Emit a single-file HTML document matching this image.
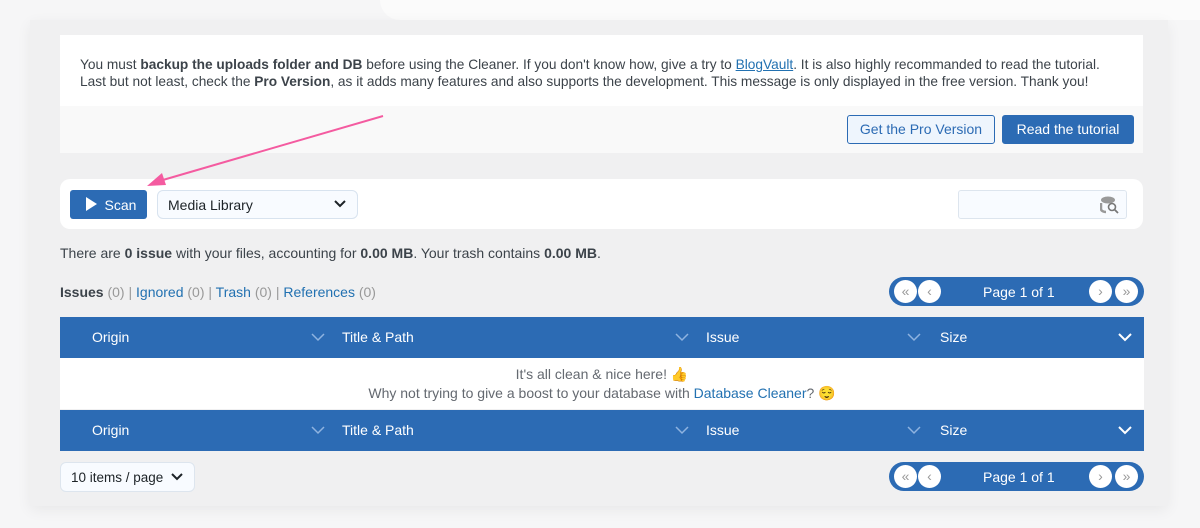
<!DOCTYPE html>
<html><head><style>
*{box-sizing:border-box;margin:0;padding:0}
body{width:1200px;height:528px;background:#f6f6f7;font-family:"Liberation Sans",sans-serif;font-size:14px;color:#3c434a;position:relative;overflow:hidden}
.bgw{position:absolute;left:380px;top:0;width:860px;height:20px;background:#fbfbfb;border-radius:0 0 0 20px}
.panel{position:absolute;left:30px;top:20px;width:1138px;height:486px;background:#f0f0f1;box-shadow:0 4px 14px rgba(0,0,0,.06)}
.abs{position:absolute}
.notice{left:60px;top:35px;width:1083px;height:118px;background:#fff}
.notice .low{position:absolute;left:0;top:71px;width:100%;height:47px;background:#f9f9f9}
.notice p{position:absolute;left:20px;top:21px;font-size:13.7px;line-height:17px;color:#3c434a;white-space:nowrap}
a{color:#2271b1}
.btn{position:absolute;height:29px;border-radius:3px;font-size:14px;line-height:27px;text-align:center}
.tb{left:60px;top:179px;width:1083px;height:50px;background:#fff;border-radius:10px}
.th{position:absolute;left:60px;width:1084px;height:41px;background:#2c6bb4;color:#fff;font-size:14px}
.th span{position:absolute;top:12px}
.th svg{position:absolute;top:15px}
.pg{position:absolute;left:889px;width:255px;height:29px;background:#2c6bb4;border-radius:15px;color:#fff}
.pg .c{position:absolute;top:3px;width:23px;height:23px;border-radius:50%;background:#fff;color:#999;font-size:14px;line-height:22px;text-align:center}
.pg .t{position:absolute;left:94px;top:7px;font-size:14px}
</style></head><body>
<div class="bgw"></div>
<div class="panel"></div>
<div class="abs notice"><div class="low"></div>
<p>You must <b>backup the uploads folder and DB</b> before using the Cleaner. If you don't know how, give a try to <a href="#">BlogVault</a>. It is also highly recommanded to read the tutorial.<br>Last but not least, check the <b>Pro Version</b>, as it adds many features and also supports the development. This message is only displayed in the free version. Thank you!</p>
</div>
<div class="btn" style="left:847px;top:115px;width:148px;background:#eef5fd;border:1px solid #2c6bb4;color:#2c6bb4">Get the Pro Version</div>
<div class="btn" style="left:1002px;top:115px;width:132px;background:#2c6bb4;color:#fff;border:1px solid #2c6bb4">Read the tutorial</div>
<div class="abs tb"></div>
<svg class="abs" style="left:140px;top:112px" width="250" height="80"><line x1="243" y1="4" x2="16" y2="70" stroke="#f45ba0" stroke-width="2"/><polygon points="7,74 22,61 26,73" fill="#f45ba0"/></svg>
<div class="btn" style="left:70px;top:190px;width:77px;background:#2c6bb4;color:#fff;padding-left:24px;line-height:30px">Scan</div>
<svg class="abs" style="left:86px;top:197px" width="12" height="15"><polygon points="0,0 11,7 0,14" fill="#fff"/></svg>
<div class="abs" style="left:157px;top:190px;width:201px;height:29px;border:1px solid #d8e3ef;border-radius:6px;background:#f8fbff;padding:6px 10px;color:#1d2327">Media Library</div>
<svg class="abs" style="left:333px;top:199px" width="14" height="10"><path d="M2 2l5 5 5-5" stroke="#1d2327" stroke-width="2" fill="none"/></svg>
<div class="abs" style="left:958px;top:190px;width:169px;height:29px;border:1px solid #dde5ee;border-radius:3px;background:#f8fbff"></div>
<svg class="abs" style="left:1100px;top:196px" width="20" height="18"><ellipse cx="8" cy="4" rx="7" ry="3.5" fill="#999"/><path d="M1 7v6c0 2 3 3 5 3" stroke="#999" stroke-width="2.5" fill="none"/><circle cx="12" cy="11" r="3.5" stroke="#777" stroke-width="1.6" fill="none"/><line x1="14.5" y1="13.5" x2="18" y2="17" stroke="#777" stroke-width="1.8"/></svg>
<div class="abs" style="left:60px;top:245px;color:#3c434a">There are <b>0 issue</b> with your files, accounting for <b>0.00 MB</b>. Your trash contains <b>0.00 MB</b>.</div>
<div class="abs" style="left:60px;top:284px;color:#999"><b style="color:#3c434a">Issues</b> (0) | <a href="#" style="text-decoration:none">Ignored</a> (0) | <a href="#" style="text-decoration:none">Trash</a> (0) | <a href="#" style="text-decoration:none">References</a> (0)</div>
<div class="pg" style="top:277px"><div class="c" style="left:5px">«</div><div class="c" style="left:29px">‹</div><div class="t">Page 1 of 1</div><div class="c" style="left:200px">›</div><div class="c" style="left:226px">»</div></div>
<div class="th" style="top:317px"><span style="left:32px">Origin</span><svg style="left:251px" width="14" height="10"><path d="M1 2l6 6 6-6" stroke="#8fb3e0" stroke-width="1.5" fill="none"/></svg><span style="left:282px">Title &amp; Path</span><svg style="left:615px" width="14" height="10"><path d="M1 2l6 6 6-6" stroke="#8fb3e0" stroke-width="1.5" fill="none"/></svg><span style="left:646px">Issue</span><svg style="left:847px" width="14" height="10"><path d="M1 2l6 6 6-6" stroke="#8fb3e0" stroke-width="1.5" fill="none"/></svg><span style="left:880px">Size</span><svg style="left:1058px" width="14" height="10"><path d="M1 2l6 6 6-6" stroke="#fff" stroke-width="2" fill="none"/></svg></div>
<div class="abs" style="left:60px;top:358px;width:1084px;height:51px;background:#fff;text-align:center;color:#646970;line-height:19px;padding-top:7px">It's all clean &amp; nice here! 👍<br>Why not trying to give a boost to your database with <a href="#" style="text-decoration:none">Database Cleaner</a>? 😌</div>
<div class="th" style="top:410px"><span style="left:32px">Origin</span><svg style="left:251px" width="14" height="10"><path d="M1 2l6 6 6-6" stroke="#8fb3e0" stroke-width="1.5" fill="none"/></svg><span style="left:282px">Title &amp; Path</span><svg style="left:615px" width="14" height="10"><path d="M1 2l6 6 6-6" stroke="#8fb3e0" stroke-width="1.5" fill="none"/></svg><span style="left:646px">Issue</span><svg style="left:847px" width="14" height="10"><path d="M1 2l6 6 6-6" stroke="#8fb3e0" stroke-width="1.5" fill="none"/></svg><span style="left:880px">Size</span><svg style="left:1058px" width="14" height="10"><path d="M1 2l6 6 6-6" stroke="#fff" stroke-width="2" fill="none"/></svg></div>
<div class="abs" style="left:60px;top:462px;width:135px;height:30px;border:1px solid #dde5ee;border-radius:6px;background:#f8fbff;padding:7px 10px;color:#1d2327;font-size:13.5px">10 items / page</div>
<svg class="abs" style="left:170px;top:472px" width="14" height="10"><path d="M2 2l5 5 5-5" stroke="#1d2327" stroke-width="2" fill="none"/></svg>
<div class="pg" style="top:462px"><div class="c" style="left:5px">«</div><div class="c" style="left:29px">‹</div><div class="t">Page 1 of 1</div><div class="c" style="left:200px">›</div><div class="c" style="left:226px">»</div></div>
</body></html>
